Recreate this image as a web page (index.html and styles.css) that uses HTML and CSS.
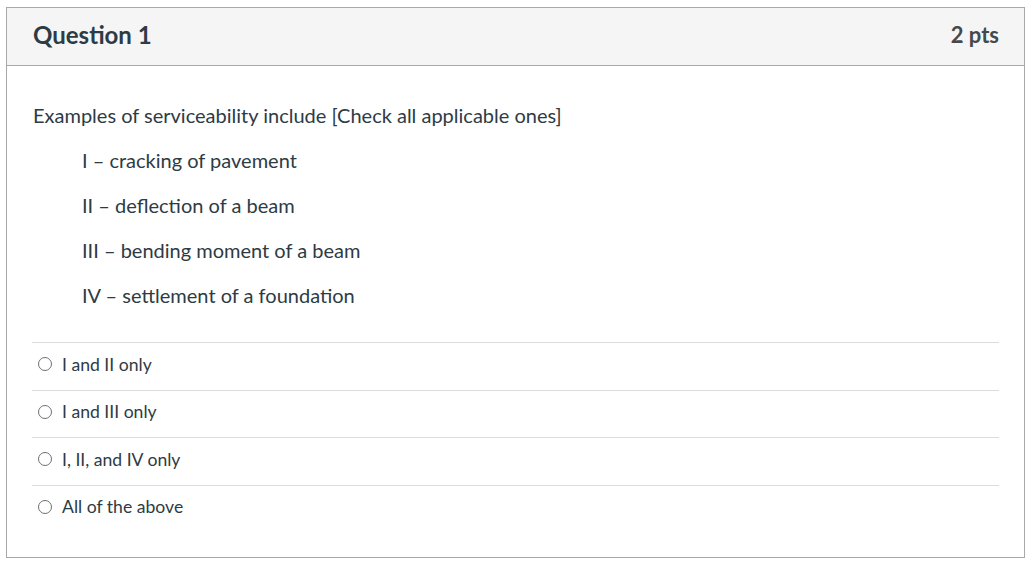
FILE: index.html
```html
<!DOCTYPE html>
<html>
<head>
<meta charset="utf-8">
<link rel="stylesheet" href="styles.css">
</head>
<body>
<div class="question">
  <div class="header">
    <span class="title">Question 1</span>
    <span class="points">2 pts</span>
  </div>
  <div class="content">
    <p class="prompt">Examples of serviceability include [Check all applicable ones]</p>
    <p class="item">I – cracking of pavement</p>
    <p class="item">II – deflection of a beam</p>
    <p class="item">III – bending moment of a beam</p>
    <p class="item">IV – settlement of a foundation</p>
    <div class="answers">
      <div class="answer"><span class="radio"></span><span>I and II only</span></div>
      <div class="answer"><span class="radio"></span><span>I and III only</span></div>
      <div class="answer"><span class="radio"></span><span>I, II, and IV only</span></div>
      <div class="answer"><span class="radio"></span><span>All of the above</span></div>
    </div>
  </div>
</div>
</body>
</html>
```
FILE: styles.css
```css
html, body {
  margin: 0;
  padding: 0;
  background: #ffffff;
}
body {
  font-family: Lato, "Open Sans", sans-serif;
  color: #2d3b45;
  padding: 7px 6px 0 6px;
}
.question {
  width: 1019px;
  height: 551px;
  box-sizing: border-box;
  border: 1px solid #a8a8a8;
}
.header {
  height: 58px;
  box-sizing: border-box;
  background: #f5f5f5;
  border-bottom: 1px solid #a8a8a8;
  display: flex;
  align-items: center;
  justify-content: space-between;
  padding: 0 25px 4px 26px;
}
.title {
  font-size: 24px;
  font-weight: 700;
}
.points {
  font-size: 22px;
  font-weight: 700;
  color: #44494d;
}
.content {
  padding: 37px 25px 0 25px;
}
.prompt {
  margin: 0 0 0 1px;
  font-size: 20px;
  line-height: 24px;
}
.item {
  margin: 21px 0 0 50px;
  font-size: 20px;
  line-height: 24px;
}
.answers {
  margin-top: 35px;
}
.answer {
  border-top: 1px solid #dcdcdc;
  height: 47.5px;
  box-sizing: border-box;
  display: flex;
  align-items: center;
  font-size: 17.6px;
  padding: 0 0 4px 6px;
  gap: 10px;
}
.radio {
  width: 12px;
  height: 12px;
  border: 1.5px solid #707070;
  border-radius: 50%;
  flex: none;
}
```
